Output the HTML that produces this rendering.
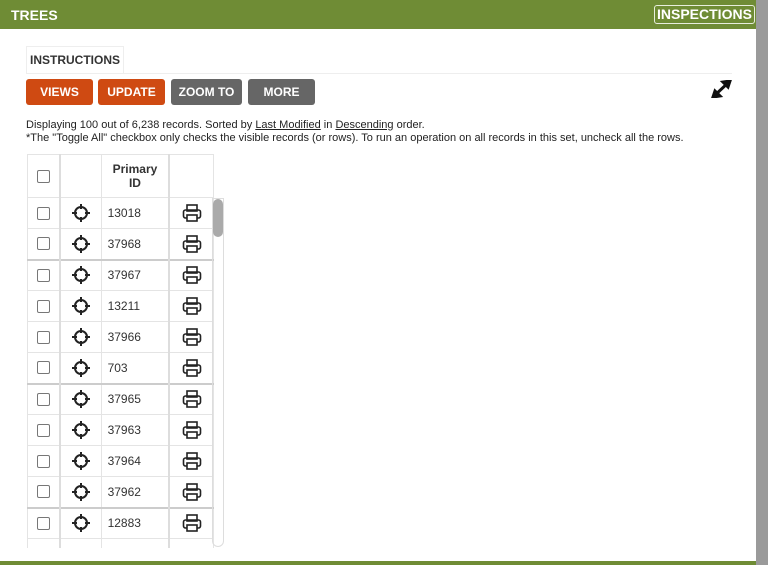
<html><head><style>
body{margin:0;width:768px;height:565px;background:#fff;font-family:"Liberation Sans",sans-serif;position:relative;overflow:hidden}
.hdr{position:absolute;left:0;top:0;width:756px;height:29px;background:#6f8c35}
.hdr .t{position:absolute;left:11px;top:7px;color:#fff;font-weight:bold;font-size:14px}
.hdr .i{position:absolute;left:654px;top:5px;color:#fff;font-weight:bold;font-size:14px;border:1px solid #e8eedd;border-radius:3px;padding:0 2px;line-height:17px}
.vs{position:absolute;left:756px;top:0;width:12px;height:565px;background:#9a9a9a}
.bot{position:absolute;left:0;top:561px;width:756px;height:4px;background:#6f8c35}
.tab{position:absolute;left:26px;top:46px;width:96px;height:27px;border:1px solid #eee;border-bottom:none;font-weight:bold;font-size:12px;color:#333;line-height:26px;text-align:center}
.line{position:absolute;left:26px;top:73px;width:706px;height:1px;background:#eee}
.b{position:absolute;top:79px;height:26px;border-radius:3px;color:#fff;font-weight:bold;font-size:12px;line-height:26px;text-align:center}
.txt{position:absolute;left:26px;top:119px;font-size:11px;color:#222;line-height:13px}
.wrap{position:absolute;left:27px;top:154px;width:200px;height:394px;overflow:hidden}
table{border-collapse:collapse;font-size:12px;color:#333}
td{border:1px solid #e4e4e4;height:31px;padding:0;text-align:center}
.cb{width:11px;height:11px;border:1px solid #777;border-radius:2px;display:inline-block;vertical-align:middle}
.sb{position:absolute;left:212px;top:198px;width:12px;height:349px;border:1px solid #ddd;border-radius:0 0 6px 6px;box-sizing:border-box}
.th{position:absolute;left:213px;top:199px;width:10px;height:38px;background:#aaa;border-radius:5px}
</style></head><body>
<div class="hdr"><span class="t">TREES</span><span class="i">INSPECTIONS</span></div>
<div class="vs"></div><div class="bot"></div>
<div class="tab">INSTRUCTIONS</div><div class="line"></div>
<div class="b" style="left:26px;width:67px;background:#cf4a12">VIEWS</div>
<div class="b" style="left:98px;width:67px;background:#cf4a12">UPDATE</div>
<div class="b" style="left:171px;width:71px;background:#666">ZOOM TO</div>
<div class="b" style="left:248px;width:67px;background:#666">MORE</div>
<svg style="position:absolute;left:711px;top:80px" width="21" height="18" viewBox="0 0 21 18"><path d="M2 17L19 1M19 1l-7 1 5 5zM2 17l7-1-5-5z" stroke="#111" stroke-width="3" fill="#111"/></svg>
<div class="txt">Displaying 100 out of 6,238 records. Sorted by <u>Last Modified</u> in <u>Descending</u> order.<br>*The "Toggle All" checkbox only checks the visible records (or rows). To run an operation on all records in this set, uncheck all the rows.</div>
<div class="wrap"><table>
<tr><td style="width:31px;height:43px"><span class="cb"></span></td><td style="width:40px;border-left:2px solid #ddd"></td><td style="width:67px;font-weight:bold">Primary<br>ID</td><td style="width:43px;border-left:2px solid #ddd"></td><td style="width:12px;border:none"></td></tr>
<tbody id="r"></tbody>
</table></div>
<div class="sb"></div><div class="th"></div>
<script>
var ids=["13018","37968","37967","13211","37966","703","37965","37963","37964","37962","12883",""];
var h="";
var tgt='<svg width="20" height="20" viewBox="0 0 20 20" style="vertical-align:middle"><circle cx="10" cy="10" r="6" fill="none" stroke="#222" stroke-width="2"/><path d="M10 1v5M10 14v5M1 10h5M14 10h5" stroke="#222" stroke-width="2"/></svg>';
var pr='<svg width="20" height="18" viewBox="0 0 20 18" style="vertical-align:middle"><rect x="5" y="1" width="10" height="6" fill="none" stroke="#222" stroke-width="1.6"/><rect x="1.5" y="6" width="17" height="8" rx="2" fill="none" stroke="#222" stroke-width="1.6"/><rect x="5" y="11" width="10" height="6" fill="#fff" stroke="#222" stroke-width="1.6"/></svg>';
ids.forEach(function(id,i){var thick=(i==2||i==6||i==10)?"border-top:2px solid #ccc;":"";var last=i==11;
h+='<tr><td style="'+thick+'">'+(last?'':'<span class="cb"></span>')+'</td><td style="border-left:2px solid #ddd;'+thick+'">'+(last?'':tgt)+'</td><td style="text-align:left;padding-left:6px;'+thick+'">'+id+'</td><td style="border-left:2px solid #ddd;'+thick+'">'+(last?'':pr)+'</td><td style="border:none"></td></tr>';});
document.getElementById("r").innerHTML=h;
</script>
</body></html>
